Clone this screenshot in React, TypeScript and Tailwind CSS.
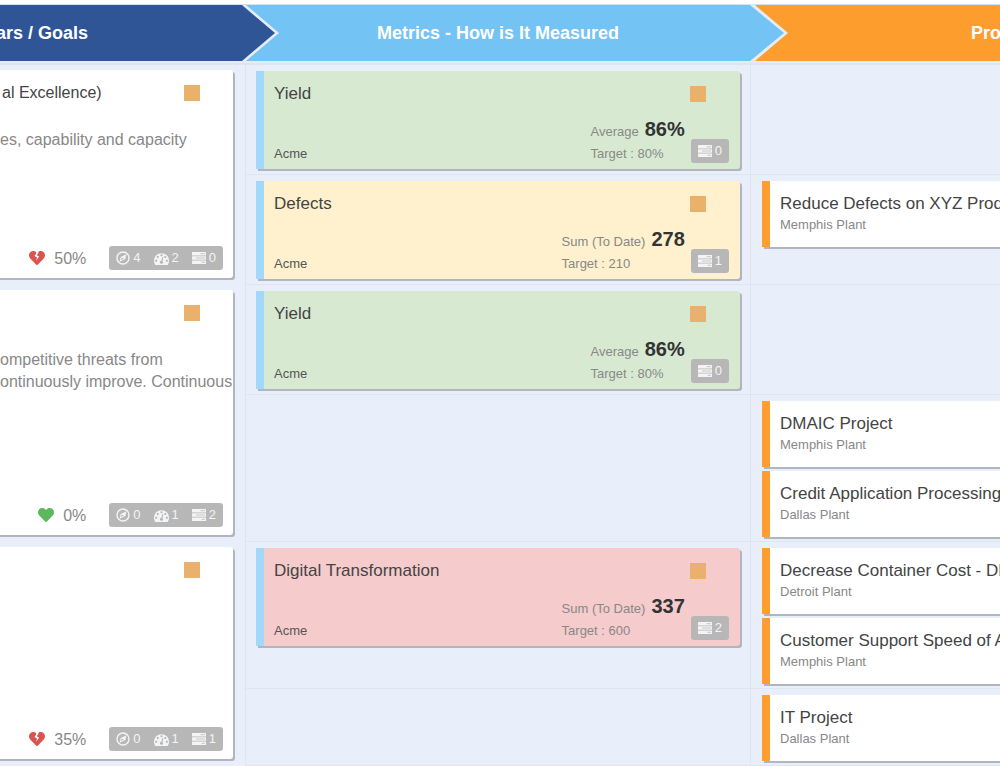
import React from "react";
import { FaHeart } from "react-icons/fa";

type Metric = {
  name: string;
  site: string;
  label: string;
  value: string;
  target: string;
  projects: number;
  tone: string;
};

type Project = { name: string; site: string };

type Row = { metric?: Metric; projects: Project[] };

type Goal = {
  title: string;
  desc: string[];
  healthy: boolean;
  percent: string;
  counts: [number, number, number];
  rows: Row[];
};

const yieldMetric: Metric = {
  name: "Yield",
  site: "Acme",
  label: "Average",
  value: "86%",
  target: "Target : 80%",
  projects: 0,
  tone: "bg-[#d8e9d2]",
};

const goals: Goal[] = [
  {
    title: "al Excellence)",
    desc: ["es, capability and capacity"],
    healthy: false,
    percent: "50%",
    counts: [4, 2, 0],
    rows: [
      { metric: yieldMetric, projects: [] },
      {
        metric: {
          name: "Defects",
          site: "Acme",
          label: "Sum (To Date)",
          value: "278",
          target: "Target : 210",
          projects: 1,
          tone: "bg-[#fff1cd]",
        },
        projects: [{ name: "Reduce Defects on XYZ Produ", site: "Memphis Plant" }],
      },
    ],
  },
  {
    title: "",
    desc: ["ompetitive threats from", "ontinuously improve. Continuous"],
    healthy: true,
    percent: "0%",
    counts: [0, 1, 2],
    rows: [
      { metric: yieldMetric, projects: [] },
      {
        projects: [
          { name: "DMAIC Project", site: "Memphis Plant" },
          { name: "Credit Application Processing", site: "Dallas Plant" },
        ],
      },
    ],
  },
  {
    title: "",
    desc: [],
    healthy: false,
    percent: "35%",
    counts: [0, 1, 1],
    rows: [
      {
        metric: {
          name: "Digital Transformation",
          site: "Acme",
          label: "Sum (To Date)",
          value: "337",
          target: "Target : 600",
          projects: 2,
          tone: "bg-[#f5cbcc]",
        },
        projects: [
          { name: "Decrease Container Cost - DM", site: "Detroit Plant" },
          { name: "Customer Support Speed of A", site: "Memphis Plant" },
        ],
      },
      { projects: [{ name: "IT Project", site: "Dallas Plant" }] },
    ],
  },
];

const BrokenHeartIcon = () => (
  <svg viewBox="0 0 512 512" className="size-4 text-[#d9534f]" aria-hidden="true">
    <path
      fill="currentColor"
      d="M462.3 62.6C407.5 15.9 326 24.3 275.7 76.2L256 96.5l-19.7-20.3C186.1 24.3 104.5 15.9 49.7 62.6c-62.800 53.600-66.100 149.800-9.900 207.900l193.500 199.800c12.500 12.900 32.800 12.900 45.300 0l193.500-199.800c56.300-58.100 53-154.300-9.800-207.900z"
    />
    <path fill="#fff" d="M236 50l-14 76-48 66 82 44-26 108 92-134-72-42 44-62 10-60z" />
  </svg>
);

const CompassIcon = () => (
  <svg viewBox="0 0 14 14" className="size-[14px]" aria-hidden="true">
    <circle cx="7" cy="7" r="6" fill="none" stroke="currentColor" strokeWidth="1.4" />
    <path
      d="M10.4 3.200L9.300 8 3.600 10.800 4.700 6z M5.600 6.700L5 9.100 7.900 7.600z"
      fill="currentColor"
      fillRule="evenodd"
    />
  </svg>
);

const GaugeIcon = () => (
  <svg viewBox="0 128 1792 1536" className="h-[13px] w-[15px]" fill="currentColor" aria-hidden="true">
    <path d="M384 1152q0-53-37.5-90.5t-90.5-37.5-90.5 37.5-37.5 90.5 37.5 90.5 90.5 37.5 90.5-37.5 37.5-90.5zm192-448q0-53-37.5-90.5t-90.5-37.5-90.5 37.5-37.5 90.5 37.5 90.5 90.5 37.5 90.5-37.5 37.5-90.5zm428 481l101-382q6-26-7.5-48.5t-38.5-29.5-48 6.5-30 39.5l-101 382q-60 5-107 43.5t-63 98.5q-20 77 20 146t117 89 146-20 89-117q16-60-6-117t-72-91zm660-33q0-53-37.5-90.5t-90.5-37.5-90.5 37.5-37.5 90.5 37.5 90.5 90.5 37.5 90.5-37.5 37.5-90.5zm-640-640q0-53-37.5-90.5t-90.5-37.5-90.5 37.5-37.5 90.5 37.5 90.5 90.5 37.5 90.5-37.5 37.5-90.5zm448 192q0-53-37.5-90.5t-90.5-37.5-90.5 37.5-37.5 90.5 37.5 90.5 90.5 37.5 90.5-37.5 37.5-90.5zm320 448q0 261-141 483-19 29-54 29h-1402q-35 0-54-29-141-221-141-483 0-182 71-348t191-286 286-191 348-71 348 71 286 191 191 286 71 348z" />
  </svg>
);

const TasksIcon = () => (
  <svg viewBox="0 0 14 12" className="h-3 w-[14px]" aria-hidden="true">
    <g fill="currentColor">
      <rect width="14" height="3.4" rx="0.5" />
      <rect y="4.3" width="14" height="3.4" rx="0.5" />
      <rect y="8.6" width="14" height="3.4" rx="0.5" />
    </g>
    <g fill="#b7b7b7" fillOpacity="0.7">
      <rect x="8.5" y="1.2" width="4.5" height="1" />
      <rect x="4" y="5.5" width="9" height="1" />
      <rect x="9.5" y="9.8" width="3.5" height="1" />
    </g>
  </svg>
);

const Count = ({ icon, value }: { icon: React.ReactNode; value: number }) => (
  <span className="flex items-center gap-[3px]">
    {icon}
    <span>{value}</span>
  </span>
);

const Badge = ({ children }: { children: React.ReactNode }) => (
  <div className="flex h-6 shrink-0 items-center gap-[13px] rounded-[3px] bg-[#b7b7b7] px-[7px] text-[13px] leading-4 text-[#f4f4f4]">
    {children}
  </div>
);

const GoalCard = ({ goal }: { goal: Goal }) => (
  <article className="flex flex-1 flex-col rounded-r-[3px] bg-white pt-3 pb-2 shadow-[2px_2px_0_#b0b5be,0_2px_0_#b0b5be]">
    <div className="flex h-[22px] items-center justify-between pr-[33px] pl-0.5">
      <h3 className="text-[16px] leading-[22px] text-[#444]">{goal.title}</h3>
      <span className="size-4 bg-[#eab16d]" />
    </div>
    <div className="mt-[25px] text-[16px] leading-[22px] whitespace-nowrap text-[#888]">
      {goal.desc.map((line) => (
        <p key={line}>{line}</p>
      ))}
    </div>
    <div className="mt-auto flex items-center justify-end pr-[10px]">
      {goal.healthy ? <FaHeart className="size-4 text-[#5cb85c]" /> : <BrokenHeartIcon />}
      <span className="mr-[23px] ml-[9px] pt-0.5 text-[16px] leading-[22px] text-[#888]">{goal.percent}</span>
      <Badge>
        <Count icon={<CompassIcon />} value={goal.counts[0]} />
        <Count icon={<GaugeIcon />} value={goal.counts[1]} />
        <Count icon={<TasksIcon />} value={goal.counts[2]} />
      </Badge>
    </div>
  </article>
);

const MetricCard = ({ metric }: { metric: Metric }) => (
  <article
    className={`flex h-[98px] justify-between rounded-r-[3px] border-l-8 border-[#a2d8f9] pl-[10px] shadow-[2px_2px_0_#b0b5be] ${metric.tone}`}
  >
    <div className="flex flex-col justify-between pt-3 pb-1">
      <h3 className="text-[17px] leading-[22px] text-[#444]">{metric.name}</h3>
      <p className="text-[13px] leading-[22px] text-[#555]">{metric.site}</p>
    </div>
    <div className="flex flex-col items-end justify-between pt-[15px] pr-[11px] pb-1">
      <span className="mr-[23px] size-4 bg-[#eab16d]" />
      <div className="flex items-end gap-[6px]">
        <div className="text-[13px] leading-[22px] text-[#888]">
          <p className="flex items-baseline gap-[6px]">
            {metric.label}
            <strong className="text-[20px] leading-[22px] text-[#333]">{metric.value}</strong>
          </p>
          <p>{metric.target}</p>
        </div>
        <div className="mb-0.5">
          <Badge>
            <Count icon={<TasksIcon />} value={metric.projects} />
          </Badge>
        </div>
      </div>
    </div>
  </article>
);

const ProjectCard = ({ project }: { project: Project }) => (
  <article className="h-[66px] overflow-hidden border-l-8 border-[#ff9d2e] bg-white pt-3 pl-[10px] whitespace-nowrap">
    <h3 className="text-[17px] leading-[22px] text-[#444]">{project.name}</h3>
    <p className="text-[13px] leading-5 text-[#888]">{project.site}</p>
  </article>
);

export default function App() {
  return (
    <main className="min-h-screen w-full overflow-hidden bg-[#e8effa] font-['Liberation_Sans',Arial,sans-serif]">
      <div className="h-1 bg-white" />
      <header className="grid grid-cols-[245fr_505fr_250fr] border-t border-b-2 border-t-[#d3e2ef] border-b-[#dde5f0] bg-[#e3ecf7] pb-0.5 text-[18px] font-bold whitespace-nowrap text-white *:h-14 *:min-w-0 *:leading-[56px]">
        <h2 className="-mr-[30px] flex justify-end bg-[#2f5597] pr-[187px] [clip-path:polygon(0_0,calc(100%-33px)_0,100%_50%,calc(100%-33px)_100%,0_100%)]">
          ars / Goals
        </h2>
        <h2 className="-mr-[34px] ml-px bg-[#74c3f5] pr-[34px] text-center [clip-path:polygon(0_0,calc(100%-34px)_0,100%_50%,calc(100%-34px)_100%,0_100%,33px_50%)]">
          Metrics - How is It Measured
        </h2>
        <h2 className="ml-[5px] bg-[#fd9d2e] pl-[216px] [clip-path:polygon(0_0,100%_0,100%_100%,0_100%,33px_50%)]">
          Pro
        </h2>
      </header>

      {goals.map((goal, i) => (
        <section key={i} className="grid grid-cols-[245fr_755fr]">
          <div className="flex min-w-0 flex-col pt-[5px] pr-3 pb-[7px]">
            <GoalCard goal={goal} />
          </div>
          <div className="min-w-0">
            {goal.rows.map((row, j) => (
              <div key={j} className="grid grid-cols-[505fr_250fr] border-b border-[#dfe6f1]">
                <div className="min-w-0 border-l border-[#dfe6f1] px-[10px] pt-[6px] pb-[5px]">
                  {row.metric && <MetricCard metric={row.metric} />}
                </div>
                <div className="flex min-w-0 flex-col gap-1 border-l border-[#dfe6f1] pt-[6px] pb-1 pl-[11px]">
                  {row.projects.map((project) => (
                    <div key={project.name} className="shadow-[2px_2px_0_#b0b5be]">
                      <ProjectCard project={project} />
                    </div>
                  ))}
                </div>
              </div>
            ))}
          </div>
        </section>
      ))}
    </main>
  );
}
